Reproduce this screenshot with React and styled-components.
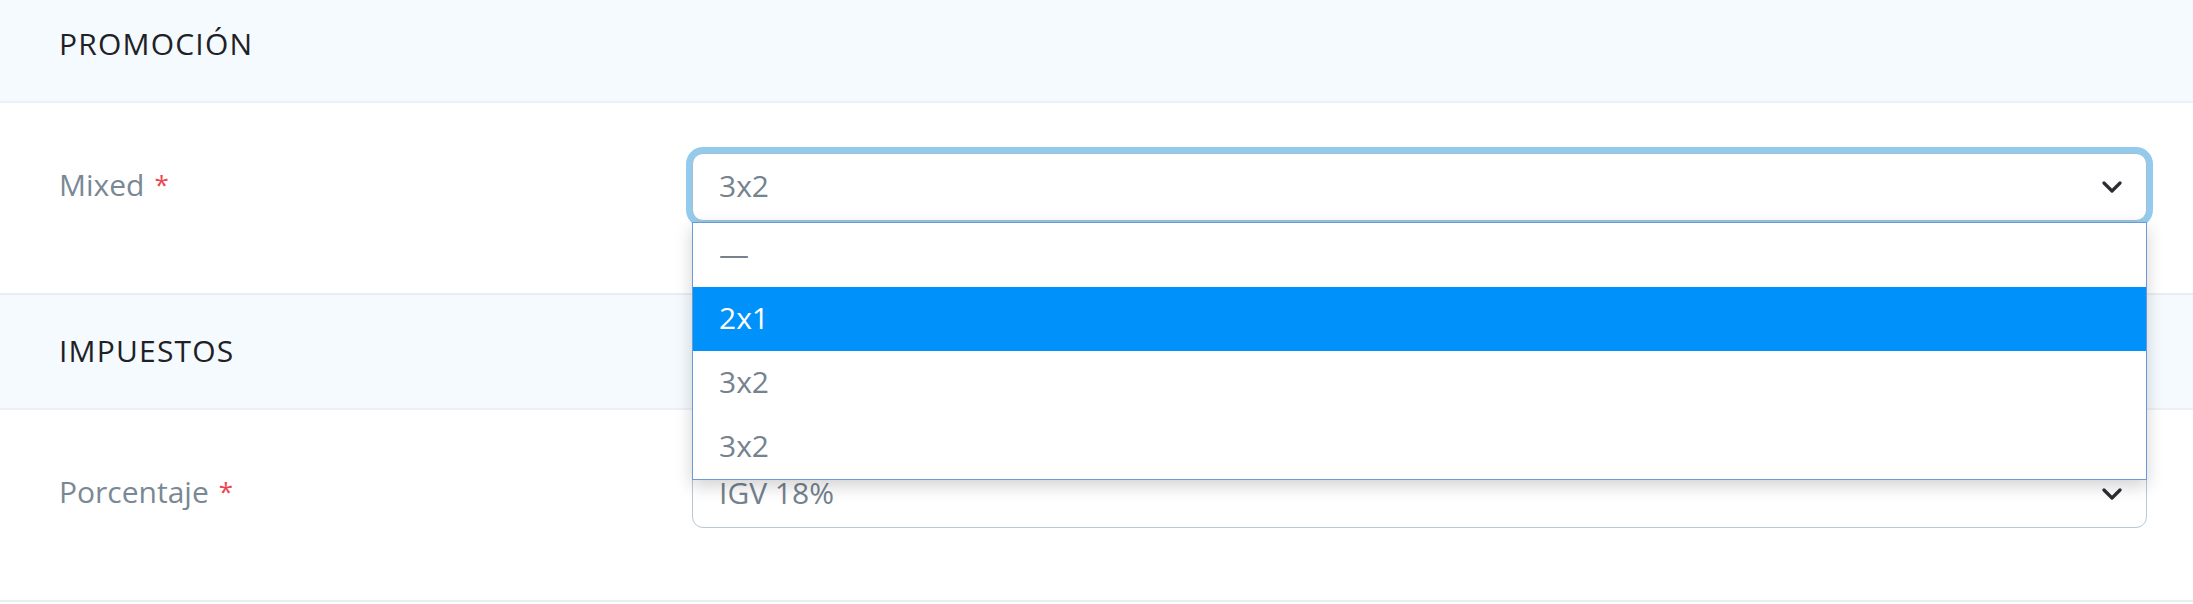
import React from 'react';
import styled, { createGlobalStyle } from 'styled-components';

const GlobalStyle = createGlobalStyle`
  html, body {
    margin: 0;
    padding: 0;
    background: #ffffff;
    overflow: hidden;
  }
  body {
    font-family: "Open Sans", "Noto Sans", sans-serif;
  }
`;

const Page = styled.div`
  margin-top: -12px;
  display: flex;
  flex-direction: column;
`;

const SectionHeader = styled.div`
  height: 115px;
  display: flex;
  align-items: center;
  padding: 0 0 3px 59px;
  box-sizing: border-box;
  background: #f5faff;
  border-bottom: 2px solid #edf1f5;
  font-size: 30px;
  color: #1e2226;
  text-transform: uppercase;
  letter-spacing: 1.2px;
`;

const FieldRow = styled.div`
  display: grid;
  grid-template-columns: 633px 1fr;
  align-items: start;
  padding: 50px 46px 72px 59px;
  border-bottom: 2px solid #eaeef2;
  position: relative;
  z-index: ${({ $raised }) => ($raised ? 5 : 1)};
`;

const Label = styled.label`
  font-size: 30px;
  line-height: 64px;
  color: #7a8895;
  display: flex;
  align-items: baseline;
  gap: 10px;
`;

const Required = styled.span`
  color: #f0424f;
  font-size: 26px;
  position: relative;
  top: -2px;
`;

const SelectWrap = styled.div`
  position: relative;
`;

const SelectBox = styled.div`
  height: 68px;
  box-sizing: border-box;
  display: flex;
  align-items: center;
  justify-content: space-between;
  padding: 0 24px 4px 26px;
  border: 1px solid ${({ $focused }) => ($focused ? '#9fbfd6' : '#b9c8d4')};
  border-radius: 11px;
  background: #fff;
  font-size: 30px;
  color: #75838f;
  box-shadow: ${({ $focused }) =>
    $focused ? '0 0 0 6px #94cbec' : 'none'};

  svg {
    margin-top: 4px;
  }
`;

const Chevron = () => (
  <svg width="20" height="12" viewBox="0 0 20 12" fill="none">
    <polyline
      points="2,2 10,10 18,2"
      stroke="#2a2e33"
      strokeWidth="3.2"
      strokeLinecap="round"
      strokeLinejoin="round"
    />
  </svg>
);

const Dropdown = styled.ul`
  position: absolute;
  left: 0;
  right: 0;
  top: 100%;
  margin: 1px 0 0;
  padding: 0;
  list-style: none;
  background: #fff;
  border: 1px solid #6b9bd6;
  box-shadow: 0 6px 16px rgba(0, 0, 0, 0.18);
  z-index: 10;
`;

const Option = styled.li`
  height: 64px;
  box-sizing: border-box;
  display: flex;
  align-items: center;
  padding: 0 0 4px 26px;
  font-size: 30px;
  color: ${({ $active }) => ($active ? '#ffffff' : '#75838f')};
  background: ${({ $active }) => ($active ? '#0191fa' : 'transparent')};
`;

const promoOptions = [
  { label: '—' },
  { label: '2x1', active: true },
  { label: '3x2' },
  { label: '3x2' },
];

const App = () => {
  return (
    <>
      <GlobalStyle />
      <Page>
        <SectionHeader>Promoción</SectionHeader>
        <FieldRow $raised>
          <Label>
            Mixed <Required>*</Required>
          </Label>
          <SelectWrap>
            <SelectBox $focused>
              <span>3x2</span>
              <Chevron />
            </SelectBox>
            <Dropdown>
              {promoOptions.map((opt, i) => (
                <Option key={i} $active={opt.active}>
                  {opt.label}
                </Option>
              ))}
            </Dropdown>
          </SelectWrap>
        </FieldRow>

        <SectionHeader>Impuestos</SectionHeader>
        <FieldRow>
          <Label>
            Porcentaje <Required>*</Required>
          </Label>
          <SelectWrap>
            <SelectBox>
              <span>IGV 18%</span>
              <Chevron />
            </SelectBox>
          </SelectWrap>
        </FieldRow>
      </Page>
    </>
  );
};

export default App;
